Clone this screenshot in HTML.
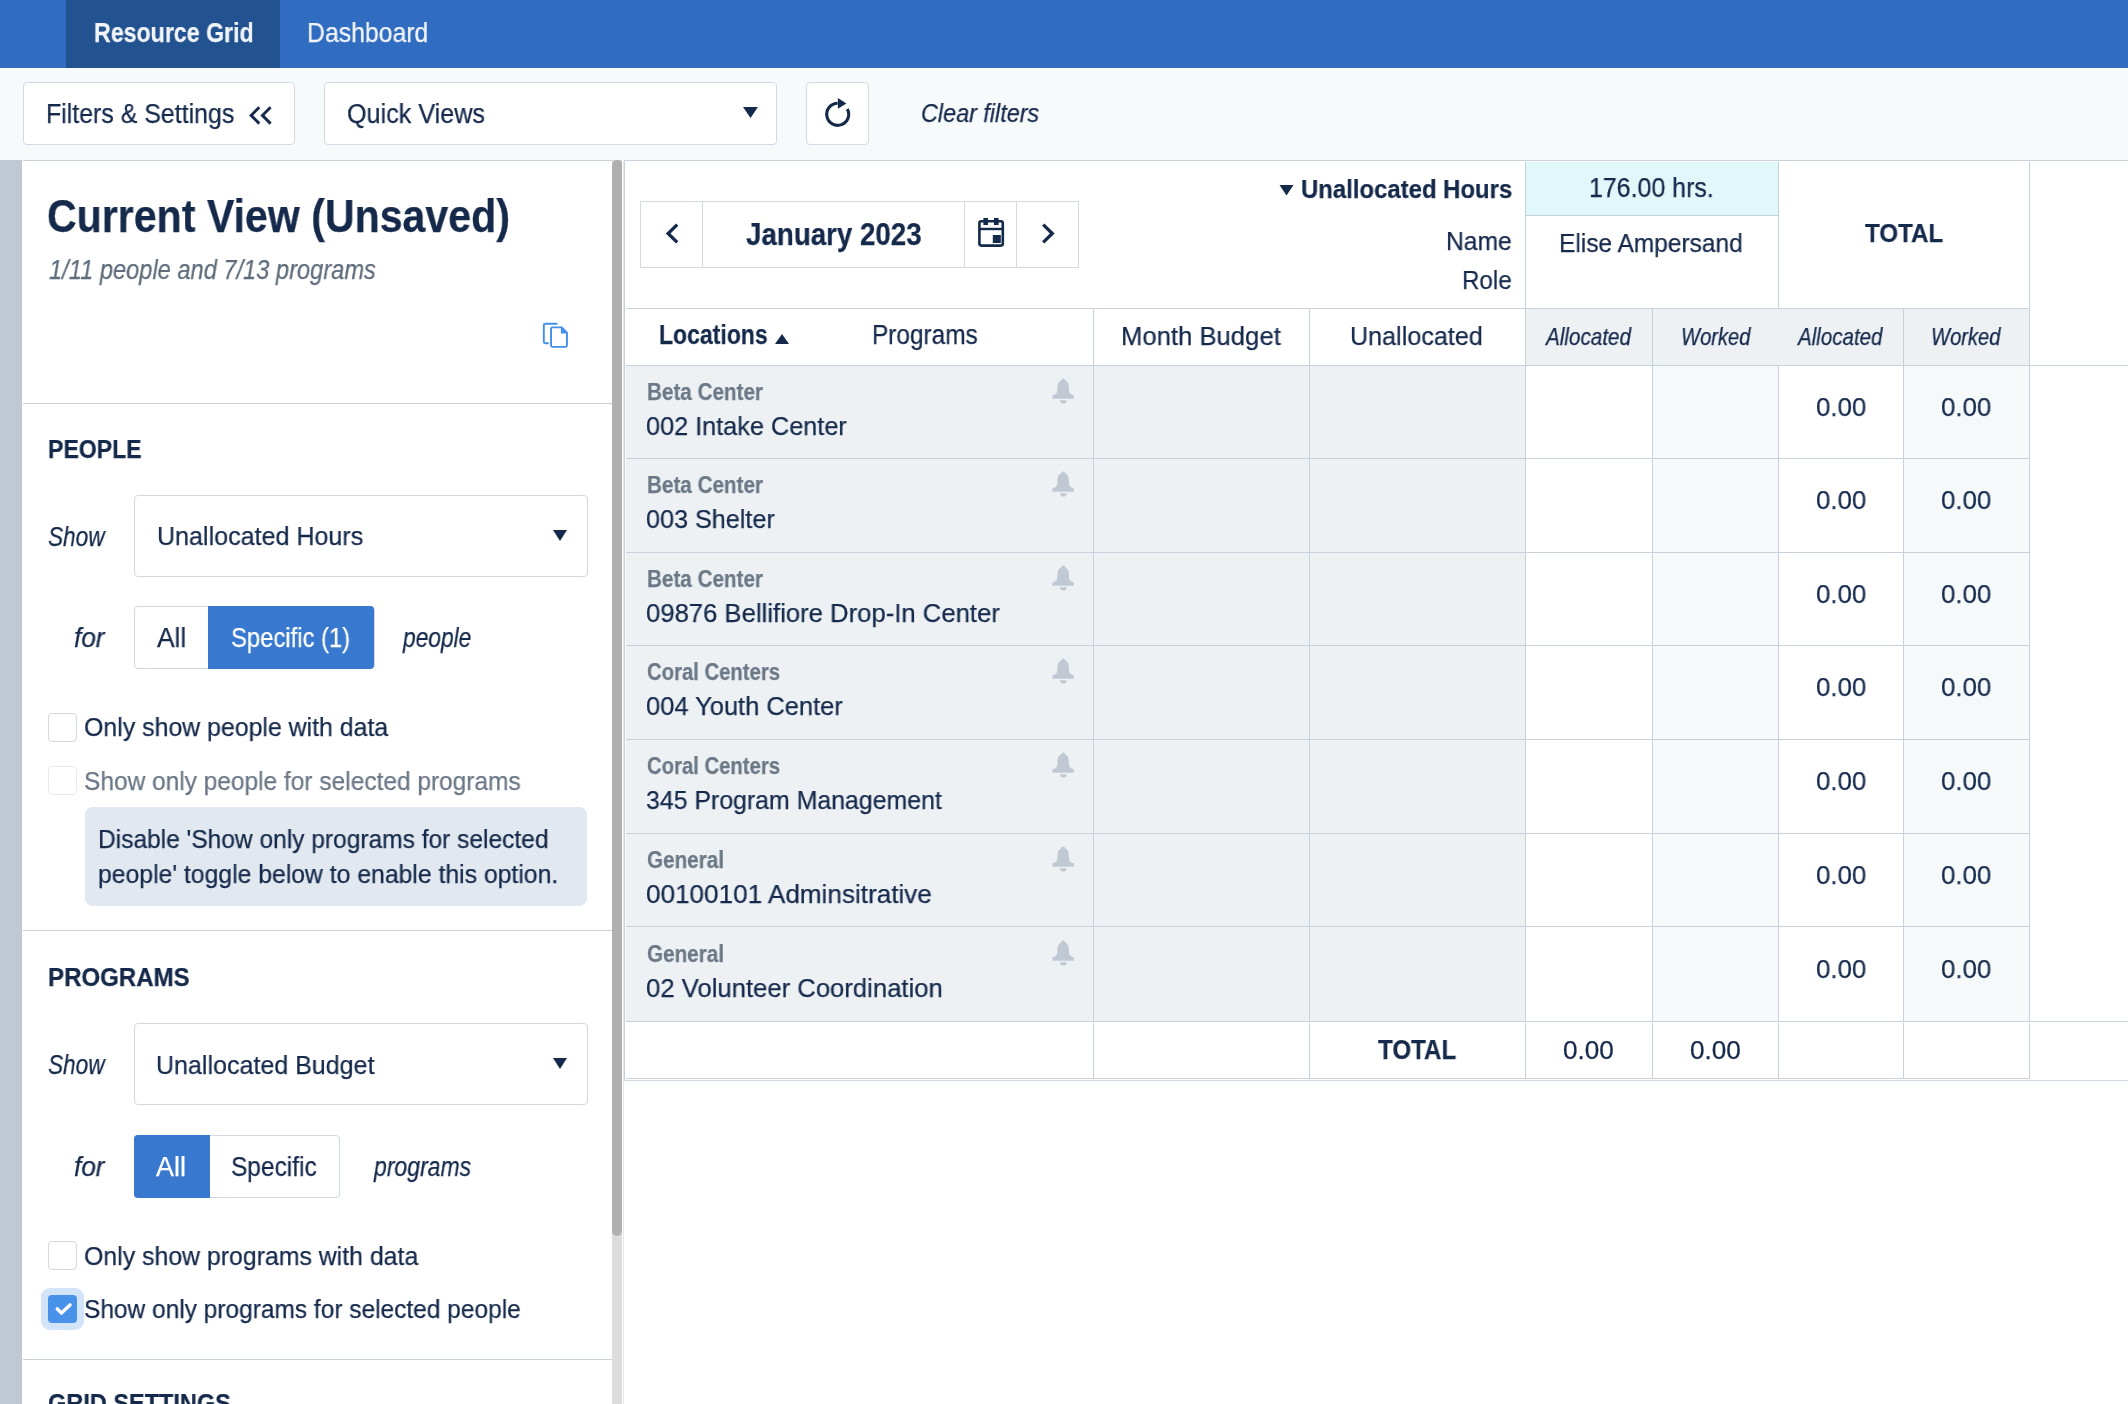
<!DOCTYPE html>
<html><head><meta charset="utf-8"><title>Resource Grid</title>
<style>
html,body{margin:0;padding:0;}
body{width:2128px;height:1404px;overflow:hidden;position:relative;background:#fff;font-family:"Liberation Sans",sans-serif;}
.b{position:absolute;}
.i{position:absolute;display:block;}
.t{position:absolute;white-space:pre;transform-origin:0 0;font-family:"Liberation Sans",sans-serif;will-change:transform;-webkit-text-stroke:0.25px currentColor;}
</style></head><body>
<div class=b style="left:0px;top:0px;width:2128px;height:68px;background:#306cc0"></div>
<div class=b style="left:66px;top:0px;width:214px;height:68px;background:#235291"></div>
<div class=b style="left:0px;top:68px;width:2128px;height:92px;background:#f7fafb"></div>
<div class=b style="left:23px;top:82px;width:272px;height:63px;background:#fff;border:1px solid #d3dae2;border-radius:4px;box-sizing:border-box"></div>
<div class=b style="left:324px;top:82px;width:453px;height:63px;background:#fff;border:1px solid #d3dae2;border-radius:4px;box-sizing:border-box"></div>
<div class=b style="left:806px;top:82px;width:63px;height:63px;background:#fff;border:1px solid #d3dae2;border-radius:4px;box-sizing:border-box"></div>
<div class=b style="left:23px;top:160px;width:589px;height:1px;background:#c9d2dc"></div>
<div class=b style="left:624px;top:160px;width:1504px;height:1px;background:#c9d2dc"></div>
<div class=b style="left:0px;top:160px;width:22px;height:1244px;background:#c0c9d3"></div>
<div class=b style="left:22px;top:161px;width:590px;height:1243px;background:#fff"></div>
<div class=b style="left:23px;top:403px;width:589px;height:1px;background:#c9d2dc"></div>
<div class=b style="left:23px;top:930px;width:589px;height:1px;background:#c9d2dc"></div>
<div class=b style="left:23px;top:1359px;width:589px;height:1px;background:#c9d2dc"></div>
<div class=b style="left:612px;top:160px;width:10px;height:1244px;background:#dcdcdc"></div>
<div class=b style="left:612px;top:160px;width:10px;height:1076px;background:#b0b0b0;border-radius:5px 4px 5px 5px"></div>
<div class=b style="left:623px;top:161px;width:1px;height:1243px;background:#e3e8ee"></div>
<div class=b style="left:624px;top:161px;width:1px;height:920px;background:#c8d1db"></div>
<div class=b style="left:133.5px;top:495px;width:454px;height:82px;background:#fff;border:1px solid #d0d7df;border-radius:4px;box-sizing:border-box"></div>
<div class=b style="left:133.5px;top:1023px;width:454px;height:82px;background:#fff;border:1px solid #d0d7df;border-radius:4px;box-sizing:border-box"></div>
<div class=b style="left:133.5px;top:606px;width:241px;height:63px;background:#fff;border:1px solid #d0d7df;border-radius:4px;box-sizing:border-box"></div>
<div class=b style="left:208px;top:606px;width:166px;height:63px;background:#3878ce;border-radius:0 4px 4px 0"></div>
<div class=b style="left:133.5px;top:1135px;width:206.5px;height:63px;background:#fff;border:1px solid #d0d7df;border-radius:4px;box-sizing:border-box"></div>
<div class=b style="left:133.5px;top:1135px;width:76.5px;height:63px;background:#3878ce;border-radius:4px 0 0 4px"></div>
<div class=b style="left:48px;top:712.5px;width:29px;height:29px;background:#fff;border:1px solid #d0d7df;border-radius:4px;box-sizing:border-box"></div>
<div class=b style="left:48px;top:766px;width:29px;height:29px;background:#fff;border:1px solid #e6eaee;border-radius:4px;box-sizing:border-box"></div>
<div class=b style="left:48px;top:1241px;width:29px;height:29px;background:#fff;border:1px solid #d0d7df;border-radius:4px;box-sizing:border-box"></div>
<div class=b style="left:41px;top:1288px;width:43px;height:42px;background:#d2e4f9;border-radius:9px"></div>
<div class=b style="left:48px;top:1295px;width:29px;height:28px;background:#4892ea;border-radius:4px"></div>
<div class=b style="left:84.5px;top:806.5px;width:502.5px;height:99.5px;background:#e2e8ef;border-radius:8px"></div>
<div class=b style="left:640px;top:200.5px;width:439px;height:67.5px;background:#fff;border:1px solid #d3dae1;box-sizing:border-box"></div>
<div class=b style="left:702px;top:201px;width:1px;height:66px;background:#d3dae1"></div>
<div class=b style="left:964px;top:201px;width:1px;height:66px;background:#d3dae1"></div>
<div class=b style="left:1016px;top:201px;width:1px;height:66px;background:#d3dae1"></div>
<div class=b style="left:1525.5px;top:162px;width:253px;height:53px;background:#e0f8f9"></div>
<div class=b style="left:1525.5px;top:215px;width:253.0px;height:1px;background:#c8d1db"></div>
<div class=b style="left:1525px;top:162px;width:1px;height:203px;background:#c8d1db"></div>
<div class=b style="left:1778px;top:162px;width:1px;height:203px;background:#c8d1db"></div>
<div class=b style="left:2029px;top:162px;width:1px;height:203px;background:#c8d1db"></div>
<div class=b style="left:626px;top:308px;width:1403.5px;height:1px;background:#c8d1db"></div>
<div class=b style="left:1526px;top:309px;width:503px;height:56px;background:#edf1f4"></div>
<div class=b style="left:1093px;top:309px;width:1px;height:56px;background:#c8d1db"></div>
<div class=b style="left:1309px;top:309px;width:1px;height:56px;background:#c8d1db"></div>
<div class=b style="left:1652px;top:309px;width:1px;height:56px;background:#c8d1db"></div>
<div class=b style="left:1903px;top:309px;width:1px;height:56px;background:#c8d1db"></div>
<div class=b style="left:626px;top:365px;width:1502px;height:1px;background:#c8d1db"></div>
<div class=b style="left:626px;top:366px;width:467px;height:92px;background:#edf1f4"></div>
<div class=b style="left:1094px;top:366px;width:215px;height:92px;background:#edf1f4"></div>
<div class=b style="left:1310px;top:366px;width:215px;height:92px;background:#edf1f4"></div>
<div class=b style="left:1653px;top:366px;width:125px;height:92px;background:#f6f9fa"></div>
<div class=b style="left:1904px;top:366px;width:125px;height:92px;background:#f6f9fa"></div>
<div class=b style="left:626px;top:458px;width:1403.5px;height:1px;background:#c8d1db"></div>
<div class=b style="left:626px;top:459px;width:467px;height:93px;background:#edf1f4"></div>
<div class=b style="left:1094px;top:459px;width:215px;height:93px;background:#edf1f4"></div>
<div class=b style="left:1310px;top:459px;width:215px;height:93px;background:#edf1f4"></div>
<div class=b style="left:1653px;top:459px;width:125px;height:93px;background:#f6f9fa"></div>
<div class=b style="left:1904px;top:459px;width:125px;height:93px;background:#f6f9fa"></div>
<div class=b style="left:626px;top:552px;width:1403.5px;height:1px;background:#c8d1db"></div>
<div class=b style="left:626px;top:553px;width:467px;height:92px;background:#edf1f4"></div>
<div class=b style="left:1094px;top:553px;width:215px;height:92px;background:#edf1f4"></div>
<div class=b style="left:1310px;top:553px;width:215px;height:92px;background:#edf1f4"></div>
<div class=b style="left:1653px;top:553px;width:125px;height:92px;background:#f6f9fa"></div>
<div class=b style="left:1904px;top:553px;width:125px;height:92px;background:#f6f9fa"></div>
<div class=b style="left:626px;top:645px;width:1403.5px;height:1px;background:#c8d1db"></div>
<div class=b style="left:626px;top:646px;width:467px;height:93px;background:#edf1f4"></div>
<div class=b style="left:1094px;top:646px;width:215px;height:93px;background:#edf1f4"></div>
<div class=b style="left:1310px;top:646px;width:215px;height:93px;background:#edf1f4"></div>
<div class=b style="left:1653px;top:646px;width:125px;height:93px;background:#f6f9fa"></div>
<div class=b style="left:1904px;top:646px;width:125px;height:93px;background:#f6f9fa"></div>
<div class=b style="left:626px;top:739px;width:1403.5px;height:1px;background:#c8d1db"></div>
<div class=b style="left:626px;top:740px;width:467px;height:93px;background:#edf1f4"></div>
<div class=b style="left:1094px;top:740px;width:215px;height:93px;background:#edf1f4"></div>
<div class=b style="left:1310px;top:740px;width:215px;height:93px;background:#edf1f4"></div>
<div class=b style="left:1653px;top:740px;width:125px;height:93px;background:#f6f9fa"></div>
<div class=b style="left:1904px;top:740px;width:125px;height:93px;background:#f6f9fa"></div>
<div class=b style="left:626px;top:833px;width:1403.5px;height:1px;background:#c8d1db"></div>
<div class=b style="left:626px;top:834px;width:467px;height:92px;background:#edf1f4"></div>
<div class=b style="left:1094px;top:834px;width:215px;height:92px;background:#edf1f4"></div>
<div class=b style="left:1310px;top:834px;width:215px;height:92px;background:#edf1f4"></div>
<div class=b style="left:1653px;top:834px;width:125px;height:92px;background:#f6f9fa"></div>
<div class=b style="left:1904px;top:834px;width:125px;height:92px;background:#f6f9fa"></div>
<div class=b style="left:626px;top:926px;width:1403.5px;height:1px;background:#c8d1db"></div>
<div class=b style="left:626px;top:927px;width:467px;height:94px;background:#edf1f4"></div>
<div class=b style="left:1094px;top:927px;width:215px;height:94px;background:#edf1f4"></div>
<div class=b style="left:1310px;top:927px;width:215px;height:94px;background:#edf1f4"></div>
<div class=b style="left:1653px;top:927px;width:125px;height:94px;background:#f6f9fa"></div>
<div class=b style="left:1904px;top:927px;width:125px;height:94px;background:#f6f9fa"></div>
<div class=b style="left:626px;top:1021px;width:1502px;height:1px;background:#c8d1db"></div>
<div class=b style="left:626px;top:1078px;width:1403.5px;height:1px;background:#c8d1db"></div>
<div class=b style="left:624px;top:1080px;width:1504px;height:1px;background:#d0d8e0"></div>
<div class=b style="left:1093px;top:365px;width:1px;height:657px;background:#c8d1db"></div>
<div class=b style="left:1093px;top:1023px;width:1px;height:56px;background:#c8d1db"></div>
<div class=b style="left:1309px;top:365px;width:1px;height:657px;background:#c8d1db"></div>
<div class=b style="left:1309px;top:1023px;width:1px;height:56px;background:#c8d1db"></div>
<div class=b style="left:1525px;top:365px;width:1px;height:657px;background:#c8d1db"></div>
<div class=b style="left:1525px;top:1023px;width:1px;height:56px;background:#c8d1db"></div>
<div class=b style="left:1652px;top:365px;width:1px;height:657px;background:#c8d1db"></div>
<div class=b style="left:1652px;top:1023px;width:1px;height:56px;background:#c8d1db"></div>
<div class=b style="left:1778px;top:365px;width:1px;height:657px;background:#c8d1db"></div>
<div class=b style="left:1778px;top:1023px;width:1px;height:56px;background:#c8d1db"></div>
<div class=b style="left:1903px;top:365px;width:1px;height:657px;background:#c8d1db"></div>
<div class=b style="left:1903px;top:1023px;width:1px;height:56px;background:#c8d1db"></div>
<div class=b style="left:2029px;top:365px;width:1px;height:657px;background:#c8d1db"></div>
<div class=b style="left:2029px;top:1023px;width:1px;height:56px;background:#c8d1db"></div>
<svg class=i style="left:240px;top:98px" width="40" height="32" viewBox="0 0 40 32"><path d="M19.3 9.2 L11.1 17.4 L19.3 25.6 M30.6 9.2 L22.4 17.4 L30.6 25.6" fill="none" stroke="#15294b" stroke-width="2.9"/></svg>
<svg class=i style="left:742px;top:106px" width="17" height="13" viewBox="0 0 17 13"><path d="M1 1 H16 L8.5 12 Z" fill="#15294b"/></svg>
<svg class=i style="left:816px;top:90px" width="44" height="46" viewBox="0 0 44 46"><path d="M31.3 18.9 A11 11 0 1 1 21.6 13.3" fill="none" stroke="#15294b" stroke-width="3.1"/><path d="M21.9 7.9 L30.4 13.4 L21.9 18.7 Z" fill="#15294b"/></svg>
<svg class=i style="left:536px;top:316px" width="40" height="38" viewBox="0 0 40 38"><path d="M20.8 7.8 H9.3 Q7.8 7.8 7.8 9.3 V25.8 Q7.8 27.3 9.3 27.3 H11.9" fill="none" stroke="#4490e8" stroke-width="1.9" stroke-linecap="round"/><path d="M25.4 11.35 H16.5 Q15.05 11.35 15.05 12.8 V29.4 Q15.05 30.85 16.5 30.85 H29.5 Q30.95 30.85 30.95 29.4 V16.6" fill="none" stroke="#4490e8" stroke-width="1.9"/><path d="M24.9 10.4 H26.2 L31.9 16.2 V17.6 H24.9 Z" fill="#4490e8"/></svg>
<svg class=i style="left:552px;top:529px" width="16" height="13" viewBox="0 0 16 13"><path d="M1 1 H15 L8 12 Z" fill="#15294b"/></svg>
<svg class=i style="left:552px;top:1057px" width="16" height="13" viewBox="0 0 16 13"><path d="M1 1 H15 L8 12 Z" fill="#15294b"/></svg>
<svg class=i style="left:48px;top:1295px" width="29" height="28" viewBox="0 0 29 28"><path d="M9.3 13.9 L13.5 17.9 L22 9.9" fill="none" stroke="#fff" stroke-width="3.5" stroke-linecap="round" stroke-linejoin="miter"/></svg>
<svg class=i style="left:660px;top:220px" width="24" height="28" viewBox="0 0 24 28"><path d="M17.2 4.6 L8.1 13.5 L17.2 22.4" fill="none" stroke="#15294b" stroke-width="3.3"/></svg>
<svg class=i style="left:1036px;top:220px" width="24" height="28" viewBox="0 0 24 28"><path d="M7.2 4.6 L16.3 13.5 L7.2 22.4" fill="none" stroke="#15294b" stroke-width="3.3"/></svg>
<svg class=i style="left:976px;top:216px" width="30" height="32" viewBox="0 0 30 32"><rect x="3.4" y="5.2" width="23.4" height="24.4" rx="2" fill="none" stroke="#15294b" stroke-width="2.6"/><rect x="3.4" y="11.8" width="23.4" height="2.4" fill="#15294b"/><rect x="7.4" y="2" width="4.6" height="7" fill="#15294b"/><rect x="18" y="2" width="4.6" height="7" fill="#15294b"/><rect x="16.8" y="19" width="8" height="8" fill="#15294b"/></svg>
<svg class=i style="left:1279px;top:184px" width="15" height="12" viewBox="0 0 15 12"><path d="M0.5 1 H14.5 L7.5 11.5 Z" fill="#15294b"/></svg>
<svg class=i style="left:774px;top:333px" width="16" height="12" viewBox="0 0 16 12"><path d="M1 11 H15 L8 1 Z" fill="#15294b"/></svg>
<svg class=i style="left:1046px;top:372px" width="34" height="34" viewBox="0 0 34 34"><path d="M17.2 6.6 C18.6 6.6 19.2 7.6 19.3 8.6 C21.8 9.6 22.8 12 22.9 15.5 L23.1 19 C23.3 21.5 25 22.6 27.9 23.2 V26.7 H6.4 V23.2 C9.3 22.6 11 21.5 11.2 19 L11.4 15.5 C11.5 12 12.5 9.6 15.1 8.6 C15.2 7.6 15.8 6.6 17.2 6.6 Z" fill="#c0c9d3"/><path d="M13.9 28.2 H20.8 C20.6 30.4 19.3 31.6 17.35 31.6 C15.4 31.6 14.1 30.4 13.9 28.2 Z" fill="#c0c9d3"/></svg>
<svg class=i style="left:1046px;top:465px" width="34" height="34" viewBox="0 0 34 34"><path d="M17.2 6.6 C18.6 6.6 19.2 7.6 19.3 8.6 C21.8 9.6 22.8 12 22.9 15.5 L23.1 19 C23.3 21.5 25 22.6 27.9 23.2 V26.7 H6.4 V23.2 C9.3 22.6 11 21.5 11.2 19 L11.4 15.5 C11.5 12 12.5 9.6 15.1 8.6 C15.2 7.6 15.8 6.6 17.2 6.6 Z" fill="#c0c9d3"/><path d="M13.9 28.2 H20.8 C20.6 30.4 19.3 31.6 17.35 31.6 C15.4 31.6 14.1 30.4 13.9 28.2 Z" fill="#c0c9d3"/></svg>
<svg class=i style="left:1046px;top:559px" width="34" height="34" viewBox="0 0 34 34"><path d="M17.2 6.6 C18.6 6.6 19.2 7.6 19.3 8.6 C21.8 9.6 22.8 12 22.9 15.5 L23.1 19 C23.3 21.5 25 22.6 27.9 23.2 V26.7 H6.4 V23.2 C9.3 22.6 11 21.5 11.2 19 L11.4 15.5 C11.5 12 12.5 9.6 15.1 8.6 C15.2 7.6 15.8 6.6 17.2 6.6 Z" fill="#c0c9d3"/><path d="M13.9 28.2 H20.8 C20.6 30.4 19.3 31.6 17.35 31.6 C15.4 31.6 14.1 30.4 13.9 28.2 Z" fill="#c0c9d3"/></svg>
<svg class=i style="left:1046px;top:652px" width="34" height="34" viewBox="0 0 34 34"><path d="M17.2 6.6 C18.6 6.6 19.2 7.6 19.3 8.6 C21.8 9.6 22.8 12 22.9 15.5 L23.1 19 C23.3 21.5 25 22.6 27.9 23.2 V26.7 H6.4 V23.2 C9.3 22.6 11 21.5 11.2 19 L11.4 15.5 C11.5 12 12.5 9.6 15.1 8.6 C15.2 7.6 15.8 6.6 17.2 6.6 Z" fill="#c0c9d3"/><path d="M13.9 28.2 H20.8 C20.6 30.4 19.3 31.6 17.35 31.6 C15.4 31.6 14.1 30.4 13.9 28.2 Z" fill="#c0c9d3"/></svg>
<svg class=i style="left:1046px;top:746px" width="34" height="34" viewBox="0 0 34 34"><path d="M17.2 6.6 C18.6 6.6 19.2 7.6 19.3 8.6 C21.8 9.6 22.8 12 22.9 15.5 L23.1 19 C23.3 21.5 25 22.6 27.9 23.2 V26.7 H6.4 V23.2 C9.3 22.6 11 21.5 11.2 19 L11.4 15.5 C11.5 12 12.5 9.6 15.1 8.6 C15.2 7.6 15.8 6.6 17.2 6.6 Z" fill="#c0c9d3"/><path d="M13.9 28.2 H20.8 C20.6 30.4 19.3 31.6 17.35 31.6 C15.4 31.6 14.1 30.4 13.9 28.2 Z" fill="#c0c9d3"/></svg>
<svg class=i style="left:1046px;top:840px" width="34" height="34" viewBox="0 0 34 34"><path d="M17.2 6.6 C18.6 6.6 19.2 7.6 19.3 8.6 C21.8 9.6 22.8 12 22.9 15.5 L23.1 19 C23.3 21.5 25 22.6 27.9 23.2 V26.7 H6.4 V23.2 C9.3 22.6 11 21.5 11.2 19 L11.4 15.5 C11.5 12 12.5 9.6 15.1 8.6 C15.2 7.6 15.8 6.6 17.2 6.6 Z" fill="#c0c9d3"/><path d="M13.9 28.2 H20.8 C20.6 30.4 19.3 31.6 17.35 31.6 C15.4 31.6 14.1 30.4 13.9 28.2 Z" fill="#c0c9d3"/></svg>
<svg class=i style="left:1046px;top:934px" width="34" height="34" viewBox="0 0 34 34"><path d="M17.2 6.6 C18.6 6.6 19.2 7.6 19.3 8.6 C21.8 9.6 22.8 12 22.9 15.5 L23.1 19 C23.3 21.5 25 22.6 27.9 23.2 V26.7 H6.4 V23.2 C9.3 22.6 11 21.5 11.2 19 L11.4 15.5 C11.5 12 12.5 9.6 15.1 8.6 C15.2 7.6 15.8 6.6 17.2 6.6 Z" fill="#c0c9d3"/><path d="M13.9 28.2 H20.8 C20.6 30.4 19.3 31.6 17.35 31.6 C15.4 31.6 14.1 30.4 13.9 28.2 Z" fill="#c0c9d3"/></svg>
<span class=t style="left:93.59px;top:18.59px;font-size:27.54px;line-height:27.54px;font-weight:700;font-style:normal;color:#f1f5f9;transform:scaleX(0.8412)">Resource Grid</span>
<span class=t style="left:307.13px;top:19.09px;font-size:27.54px;line-height:27.54px;font-weight:400;font-style:normal;color:#f1f5f9;transform:scaleX(0.9007)">Dashboard</span>
<span class=t style="left:46.13px;top:101.21px;font-size:26.81px;line-height:26.81px;font-weight:400;font-style:normal;color:#15294b;transform:scaleX(0.9294)">Filters &amp; Settings</span>
<span class=t style="left:346.62px;top:101.21px;font-size:26.81px;line-height:26.81px;font-weight:400;font-style:normal;color:#15294b;transform:scaleX(0.9392)">Quick Views</span>
<span class=t style="left:921.43px;top:100.33px;font-size:26.09px;line-height:26.09px;font-weight:400;font-style:italic;color:#15294b;transform:scaleX(0.8958)">Clear filters</span>
<span class=t style="left:47.31px;top:192.46px;font-size:47.10px;line-height:47.10px;font-weight:700;font-style:normal;color:#15294b;transform:scaleX(0.8727)">Current View (Unsaved)</span>
<span class=t style="left:49.17px;top:255.59px;font-size:27.54px;line-height:27.54px;font-weight:400;font-style:italic;color:#5f6c7b;transform:scaleX(0.8587)">1/11 people and 7/13 programs</span>
<span class=t style="left:47.94px;top:435.52px;font-size:26.45px;line-height:26.45px;font-weight:700;font-style:normal;color:#15294b;transform:scaleX(0.8729)">PEOPLE</span>
<span class=t style="left:47.96px;top:523.71px;font-size:26.81px;line-height:26.81px;font-weight:400;font-style:italic;color:#15294b;transform:scaleX(0.8439)">Show</span>
<span class=t style="left:156.62px;top:522.58px;font-size:26.09px;line-height:26.09px;font-weight:400;font-style:normal;color:#15294b;transform:scaleX(0.9614)">Unallocated Hours</span>
<span class=t style="left:74.08px;top:625.21px;font-size:26.81px;line-height:26.81px;font-weight:400;font-style:italic;color:#15294b;transform:scaleX(0.9777)">for</span>
<span class=t style="left:156.58px;top:625.21px;font-size:26.81px;line-height:26.81px;font-weight:400;font-style:normal;color:#15294b;transform:scaleX(0.9855)">All</span>
<span class=t style="left:231.17px;top:625.21px;font-size:26.81px;line-height:26.81px;font-weight:400;font-style:normal;color:#ffffff;transform:scaleX(0.8891)">Specific (1)</span>
<span class=t style="left:402.95px;top:625.21px;font-size:26.81px;line-height:26.81px;font-weight:400;font-style:italic;color:#15294b;transform:scaleX(0.8492)">people</span>
<span class=t style="left:84.13px;top:714.27px;font-size:26.45px;line-height:26.45px;font-weight:400;font-style:normal;color:#15294b;transform:scaleX(0.9410)">Only show people with data</span>
<span class=t style="left:84.14px;top:767.83px;font-size:26.09px;line-height:26.09px;font-weight:400;font-style:normal;color:#6b7786;transform:scaleX(0.9385)">Show only people for selected programs</span>
<span class=t style="left:98.39px;top:826.94px;font-size:25.36px;line-height:25.36px;font-weight:400;font-style:normal;color:#15294b;transform:scaleX(0.9672)">Disable 'Show only programs for selected</span>
<span class=t style="left:98.38px;top:861.69px;font-size:25.36px;line-height:25.36px;font-weight:400;font-style:normal;color:#15294b;transform:scaleX(0.9759)">people' toggle below to enable this option.</span>
<span class=t style="left:47.91px;top:964.27px;font-size:26.45px;line-height:26.45px;font-weight:700;font-style:normal;color:#15294b;transform:scaleX(0.9100)">PROGRAMS</span>
<span class=t style="left:47.96px;top:1052.21px;font-size:26.81px;line-height:26.81px;font-weight:400;font-style:italic;color:#15294b;transform:scaleX(0.8439)">Show</span>
<span class=t style="left:156.12px;top:1051.83px;font-size:26.09px;line-height:26.09px;font-weight:400;font-style:normal;color:#15294b;transform:scaleX(0.9599)">Unallocated Budget</span>
<span class=t style="left:74.08px;top:1153.71px;font-size:26.81px;line-height:26.81px;font-weight:400;font-style:italic;color:#15294b;transform:scaleX(0.9777)">for</span>
<span class=t style="left:156.06px;top:1153.71px;font-size:26.81px;line-height:26.81px;font-weight:400;font-style:normal;color:#ffffff;transform:scaleX(1.0034)">All</span>
<span class=t style="left:231.14px;top:1153.71px;font-size:26.81px;line-height:26.81px;font-weight:400;font-style:normal;color:#15294b;transform:scaleX(0.9134)">Specific</span>
<span class=t style="left:374.19px;top:1153.71px;font-size:26.81px;line-height:26.81px;font-weight:400;font-style:italic;color:#15294b;transform:scaleX(0.8580)">programs</span>
<span class=t style="left:84.13px;top:1242.52px;font-size:26.45px;line-height:26.45px;font-weight:400;font-style:normal;color:#15294b;transform:scaleX(0.9399)">Only show programs with data</span>
<span class=t style="left:84.14px;top:1296.02px;font-size:26.45px;line-height:26.45px;font-weight:400;font-style:normal;color:#15294b;transform:scaleX(0.9258)">Show only programs for selected people</span>
<span class=t style="left:47.93px;top:1389.52px;font-size:26.45px;line-height:26.45px;font-weight:700;font-style:normal;color:#15294b;transform:scaleX(0.8894)">GRID SETTINGS</span>
<span class=t style="left:746.03px;top:218.90px;font-size:31.88px;line-height:31.88px;font-weight:700;font-style:normal;color:#15294b;transform:scaleX(0.8696)">January 2023</span>
<span class=t style="left:1300.66px;top:175.83px;font-size:26.09px;line-height:26.09px;font-weight:700;font-style:normal;color:#15294b;transform:scaleX(0.9165)">Unallocated Hours</span>
<span class=t style="left:1589.13px;top:173.59px;font-size:27.54px;line-height:27.54px;font-weight:400;font-style:normal;color:#15294b;transform:scaleX(0.9060)">176.00 hrs.</span>
<span class=t style="left:1446.14px;top:228.94px;font-size:25.36px;line-height:25.36px;font-weight:400;font-style:normal;color:#15294b;transform:scaleX(0.9715)">Name</span>
<span class=t style="left:1559.14px;top:229.52px;font-size:26.45px;line-height:26.45px;font-weight:400;font-style:normal;color:#15294b;transform:scaleX(0.9260)">Elise Ampersand</span>
<span class=t style="left:1462.15px;top:267.27px;font-size:26.45px;line-height:26.45px;font-weight:400;font-style:normal;color:#15294b;transform:scaleX(0.9139)">Role</span>
<span class=t style="left:1864.66px;top:220.33px;font-size:26.09px;line-height:26.09px;font-weight:700;font-style:normal;color:#15294b;transform:scaleX(0.9253)">TOTAL</span>
<span class=t style="left:659.19px;top:321.71px;font-size:26.81px;line-height:26.81px;font-weight:700;font-style:normal;color:#15294b;transform:scaleX(0.8582)">Locations</span>
<span class=t style="left:872.15px;top:321.71px;font-size:26.81px;line-height:26.81px;font-weight:400;font-style:normal;color:#15294b;transform:scaleX(0.9100)">Programs</span>
<span class=t style="left:1121.10px;top:322.83px;font-size:26.09px;line-height:26.09px;font-weight:400;font-style:normal;color:#15294b;transform:scaleX(0.9840)">Month Budget</span>
<span class=t style="left:1350.12px;top:322.83px;font-size:26.09px;line-height:26.09px;font-weight:400;font-style:normal;color:#15294b;transform:scaleX(0.9639)">Unallocated</span>
<span class=t style="left:1545.78px;top:326.29px;font-size:23.19px;line-height:23.19px;font-weight:400;font-style:italic;color:#15294b;transform:scaleX(0.8911)">Allocated</span>
<span class=t style="left:1681.29px;top:326.29px;font-size:23.19px;line-height:23.19px;font-weight:400;font-style:italic;color:#15294b;transform:scaleX(0.8693)">Worked</span>
<span class=t style="left:1798.28px;top:326.29px;font-size:23.19px;line-height:23.19px;font-weight:400;font-style:italic;color:#15294b;transform:scaleX(0.8858)">Allocated</span>
<span class=t style="left:1931.29px;top:326.29px;font-size:23.19px;line-height:23.19px;font-weight:400;font-style:italic;color:#15294b;transform:scaleX(0.8693)">Worked</span>
<span class=t style="left:646.78px;top:381.29px;font-size:23.19px;line-height:23.19px;font-weight:700;font-style:normal;color:#6b7886;transform:scaleX(0.8915)">Beta Center</span>
<span class=t style="left:646.12px;top:412.52px;font-size:26.45px;line-height:26.45px;font-weight:400;font-style:normal;color:#15294b;transform:scaleX(0.9553)">002 Intake Center</span>
<span class=t style="left:1815.60px;top:394.33px;font-size:26.67px;line-height:26.67px;font-weight:400;font-style:normal;color:#15294b;transform:scaleX(0.9695)">0.00</span>
<span class=t style="left:1940.60px;top:394.33px;font-size:26.67px;line-height:26.67px;font-weight:400;font-style:normal;color:#15294b;transform:scaleX(0.9695)">0.00</span>
<span class=t style="left:646.78px;top:474.29px;font-size:23.19px;line-height:23.19px;font-weight:700;font-style:normal;color:#6b7886;transform:scaleX(0.8915)">Beta Center</span>
<span class=t style="left:646.12px;top:505.52px;font-size:26.45px;line-height:26.45px;font-weight:400;font-style:normal;color:#15294b;transform:scaleX(0.9521)">003 Shelter</span>
<span class=t style="left:1815.60px;top:487.33px;font-size:26.67px;line-height:26.67px;font-weight:400;font-style:normal;color:#15294b;transform:scaleX(0.9695)">0.00</span>
<span class=t style="left:1940.60px;top:487.33px;font-size:26.67px;line-height:26.67px;font-weight:400;font-style:normal;color:#15294b;transform:scaleX(0.9695)">0.00</span>
<span class=t style="left:646.78px;top:568.29px;font-size:23.19px;line-height:23.19px;font-weight:700;font-style:normal;color:#6b7886;transform:scaleX(0.8915)">Beta Center</span>
<span class=t style="left:646.10px;top:599.52px;font-size:26.45px;line-height:26.45px;font-weight:400;font-style:normal;color:#15294b;transform:scaleX(0.9708)">09876 Bellifiore Drop-In Center</span>
<span class=t style="left:1815.60px;top:581.33px;font-size:26.67px;line-height:26.67px;font-weight:400;font-style:normal;color:#15294b;transform:scaleX(0.9695)">0.00</span>
<span class=t style="left:1940.60px;top:581.33px;font-size:26.67px;line-height:26.67px;font-weight:400;font-style:normal;color:#15294b;transform:scaleX(0.9695)">0.00</span>
<span class=t style="left:646.79px;top:661.29px;font-size:23.19px;line-height:23.19px;font-weight:700;font-style:normal;color:#6b7886;transform:scaleX(0.8747)">Coral Centers</span>
<span class=t style="left:646.11px;top:692.52px;font-size:26.45px;line-height:26.45px;font-weight:400;font-style:normal;color:#15294b;transform:scaleX(0.9630)">004 Youth Center</span>
<span class=t style="left:1815.60px;top:674.33px;font-size:26.67px;line-height:26.67px;font-weight:400;font-style:normal;color:#15294b;transform:scaleX(0.9695)">0.00</span>
<span class=t style="left:1940.60px;top:674.33px;font-size:26.67px;line-height:26.67px;font-weight:400;font-style:normal;color:#15294b;transform:scaleX(0.9695)">0.00</span>
<span class=t style="left:646.79px;top:755.29px;font-size:23.19px;line-height:23.19px;font-weight:700;font-style:normal;color:#6b7886;transform:scaleX(0.8747)">Coral Centers</span>
<span class=t style="left:646.13px;top:786.52px;font-size:26.45px;line-height:26.45px;font-weight:400;font-style:normal;color:#15294b;transform:scaleX(0.9404)">345 Program Management</span>
<span class=t style="left:1815.60px;top:768.33px;font-size:26.67px;line-height:26.67px;font-weight:400;font-style:normal;color:#15294b;transform:scaleX(0.9695)">0.00</span>
<span class=t style="left:1940.60px;top:768.33px;font-size:26.67px;line-height:26.67px;font-weight:400;font-style:normal;color:#15294b;transform:scaleX(0.9695)">0.00</span>
<span class=t style="left:646.78px;top:849.29px;font-size:23.19px;line-height:23.19px;font-weight:700;font-style:normal;color:#6b7886;transform:scaleX(0.8917)">General</span>
<span class=t style="left:646.09px;top:880.52px;font-size:26.45px;line-height:26.45px;font-weight:400;font-style:normal;color:#15294b;transform:scaleX(0.9872)">00100101 Adminsitrative</span>
<span class=t style="left:1815.60px;top:862.33px;font-size:26.67px;line-height:26.67px;font-weight:400;font-style:normal;color:#15294b;transform:scaleX(0.9695)">0.00</span>
<span class=t style="left:1940.60px;top:862.33px;font-size:26.67px;line-height:26.67px;font-weight:400;font-style:normal;color:#15294b;transform:scaleX(0.9695)">0.00</span>
<span class=t style="left:646.78px;top:943.29px;font-size:23.19px;line-height:23.19px;font-weight:700;font-style:normal;color:#6b7886;transform:scaleX(0.8917)">General</span>
<span class=t style="left:646.10px;top:974.52px;font-size:26.45px;line-height:26.45px;font-weight:400;font-style:normal;color:#15294b;transform:scaleX(0.9708)">02 Volunteer Coordination</span>
<span class=t style="left:1815.60px;top:956.33px;font-size:26.67px;line-height:26.67px;font-weight:400;font-style:normal;color:#15294b;transform:scaleX(0.9695)">0.00</span>
<span class=t style="left:1940.60px;top:956.33px;font-size:26.67px;line-height:26.67px;font-weight:400;font-style:normal;color:#15294b;transform:scaleX(0.9695)">0.00</span>
<span class=t style="left:1377.65px;top:1037.21px;font-size:26.81px;line-height:26.81px;font-weight:700;font-style:normal;color:#15294b;transform:scaleX(0.9005)">TOTAL</span>
<span class=t style="left:1563.09px;top:1036.83px;font-size:26.09px;line-height:26.09px;font-weight:400;font-style:normal;color:#15294b;transform:scaleX(1.0012)">0.00</span>
<span class=t style="left:1690.09px;top:1036.83px;font-size:26.09px;line-height:26.09px;font-weight:400;font-style:normal;color:#15294b;transform:scaleX(1.0012)">0.00</span>
</body></html>
